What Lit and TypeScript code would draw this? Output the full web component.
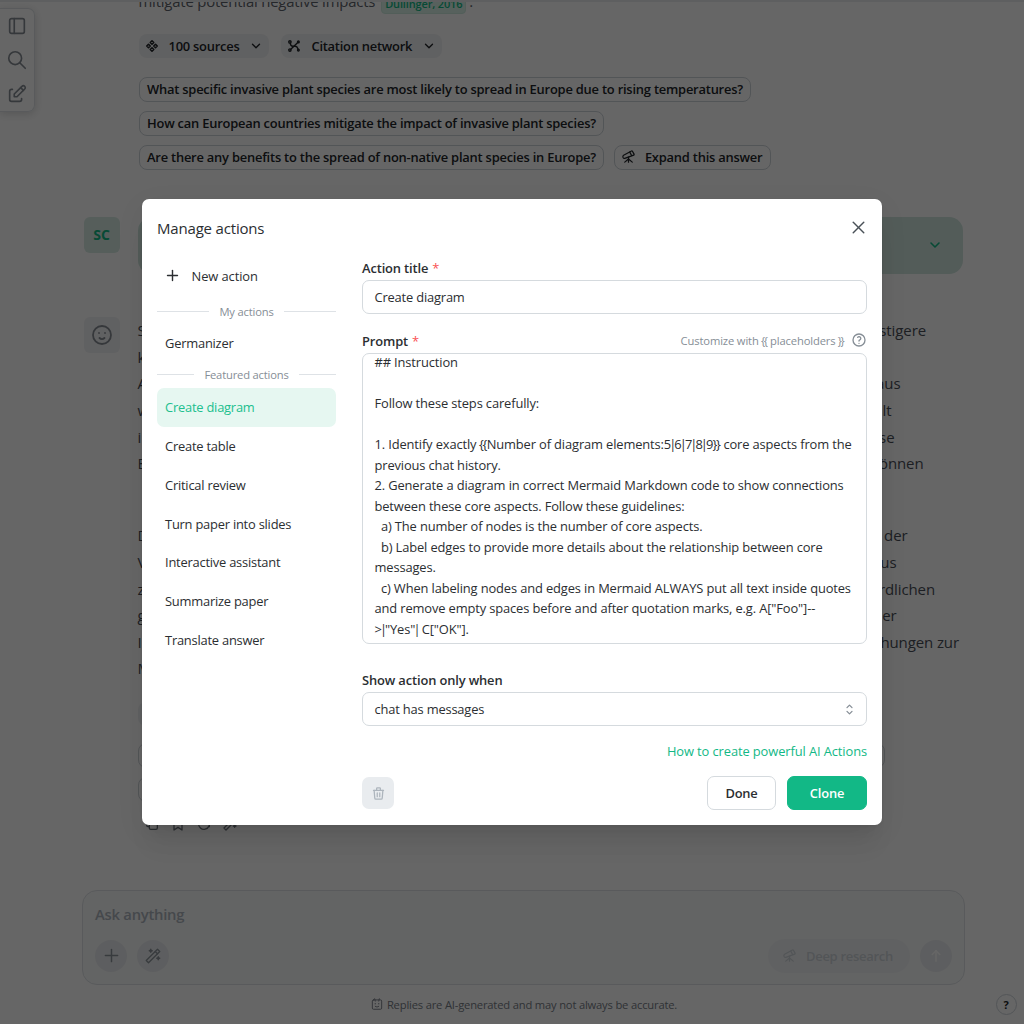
import { LitElement, html, css, svg } from "lit";
import { customElement, property } from "lit/decorators.js";
import { classMap } from "lit/directives/class-map.js";

const PATHS: Record<string, string[]> = {
  sidebar: ["M6 4h12a2 2 0 0 1 2 2v12a2 2 0 0 1-2 2H6a2 2 0 0 1-2-2V6a2 2 0 0 1 2-2z", "M9 4v16"],
  search: ["M3 10a7 7 0 1 0 14 0a7 7 0 1 0-14 0", "M21 21l-6-6"],
  edit: [
    "M7 7H6a2 2 0 0 0-2 2v9a2 2 0 0 0 2 2h9a2 2 0 0 0 2-2v-1",
    "M20.385 6.585a2.1 2.1 0 0 0-2.97-2.97L9 12v3h3l8.385-8.415z",
    "M16 5l3 3",
  ],
  components: [
    "M3 12l3 3l3-3l-3-3z",
    "M15 12l3 3l3-3l-3-3z",
    "M9 6l3 3l3-3l-3-3z",
    "M9 18l3 3l3-3l-3-3z",
  ],
  network: [
    "M3 5a2 2 0 1 0 4 0a2 2 0 1 0-4 0",
    "M18 5a1.500 1.500 0 1 0 3 0a1.500 1.500 0 1 0-3 0",
    "M3 19a2 2 0 1 0 4 0a2 2 0 1 0-4 0",
    "M18 19a1.500 1.500 0 1 0 3 0a1.500 1.500 0 1 0-3 0",
    "M6.500 17.500L18.500 6",
    "M5.500 7c.5 3.500 2 5.500 4.500 5.500h4c2.500 0 4 2 5 5",
  ],
  chevron: ["M6 9l6 6l6-6"],
  telescope: [
    "M6 21l6-5l6 5",
    "M12 13v8",
    "M3.294 13.678l.166.281c.52.88 1.624 1.265 2.605.91l14.242-5.165a1.023 1.023 0 0 0 .565-1.456l-2.620-4.705a1.087 1.087 0 0 0-1.447-.42l-12.694 6.944c-1.014.555-1.426 2.110-.817 3.611z",
    "M14 5l3 5.500",
  ],
  smile: ["M3 12a9 9 0 1 0 18 0a9 9 0 1 0-18 0", "M9 10h.01", "M15 10h.01", "M9.500 15a3.500 3.500 0 0 0 5 0"],
  plus: ["M12 5v14", "M5 12h14"],
  close: ["M18 6L6 18", "M6 6l12 12"],
  help: [
    "M3 12a9 9 0 1 0 18 0a9 9 0 1 0-18 0",
    "M12 17v.01",
    "M12 13.500a1.500 1.500 0 0 1 1-1.500a2.600 2.600 0 1 0-3-4",
  ],
  selector: ["M8 9l4-4l4 4", "M16 15l-4 4l-4-4"],
  trash: [
    "M4 7h16",
    "M10 11v6",
    "M14 11v6",
    "M5 7l1 12a2 2 0 0 0 2 2h8a2 2 0 0 0 2-2l1-12",
    "M9 7V4a1 1 0 0 1 1-1h4a1 1 0 0 1 1 1v3",
  ],
  wand: [
    "M6 21L21 6l-3-3L3 18l3 3",
    "M15 6l3 3",
    "M9 3a2 2 0 0 0 2 2a2 2 0 0 0-2 2a2 2 0 0 0-2-2a2 2 0 0 0 2-2",
    "M19 13a2 2 0 0 0 2 2a2 2 0 0 0-2 2a2 2 0 0 0-2-2a2 2 0 0 0 2-2",
  ],
  arrowUp: ["M12 5v14", "M17 10l-5-5", "M7 10l5-5"],
  robot: [
    "M6 5h12a2 2 0 0 1 2 2v12a2 2 0 0 1-2 2H6a2 2 0 0 1-2-2V7a2 2 0 0 1 2-2z",
    "M9 16c1 .667 2 1 3 1s2-.333 3-1",
    "M9 7L8 3",
    "M15 7l1-4",
    "M9 12v-1",
    "M15 12v-1",
  ],
  copy: [
    "M10 8h8a2 2 0 0 1 2 2v8a2 2 0 0 1-2 2h-8a2 2 0 0 1-2-2v-8a2 2 0 0 1 2-2z",
    "M16 8V6a2 2 0 0 0-2-2H6a2 2 0 0 0-2 2v8a2 2 0 0 0 2 2h2",
  ],
  bookmark: ["M18 7v14l-6-4l-6 4V7a4 4 0 0 1 4-4h4a4 4 0 0 1 4 4z"],
  refresh: ["M19.950 11a8 8 0 1 0-.5 4", "M20 16v-5h-5"],
};

@customElement("ui-icon")
export class UiIcon extends LitElement {
  static styles = css`
    :host { display: inline-flex; flex: none; width: 16px; height: 16px; }
    .glyph { width: 100%; height: 100%; fill: none; stroke: currentColor; stroke-linecap: round; stroke-linejoin: round; }
  `;
  @property() name = "";
  @property({ type: Number }) weight = 2;
  render() {
    return html`<svg class="glyph" viewBox="0 0 24 24" stroke-width=${this.weight}>
      ${(PATHS[this.name] ?? []).map((d) => svg`<path d=${d}></path>`)}
    </svg>`;
  }
}

@customElement("chat-page")
export class ChatPage extends LitElement {
  static styles = css`
    :host { display: flex; position: relative; z-index: 0; width: 1024px; height: 1024px; overflow: hidden; background: #fff;
      color: #212529; font-family: "Open Sans", "Noto Sans", sans-serif; font-size: 13px; }
    * { box-sizing: border-box; }
    .rail { flex: none; width: 35px; height: 104px; margin-top: 8px; border: 1px solid #dee2e6; border-left: 0;
      border-radius: 0 7px 7px 0; box-shadow: 0 2px 8px rgba(0,0,0,.16); display: flex; flex-direction: column;
      align-items: center; gap: 12px; padding: 6px 1px 0 0; color: #868c94; z-index: 1; }
    .rail ui-icon { width: 22px; height: 22px; }
    .main { flex: 1; min-width: 0; height: 1024px; border-top: 2px solid #eceef0; margin-left: -35px; padding-left: 82px;
      display: flex; flex-direction: column; }
    .col { padding-left: 56.500px; display: flex; flex-direction: column; align-items: flex-start; }
    .tail { height: 12px; display: flex; align-items: flex-end; overflow: hidden; color: #5c636b; font-size: 14.900px; line-height: 22px; }
    .tail-text { height: 24px; white-space: nowrap; letter-spacing: -.19px; }
    .cite { margin-left: 6px; height: 17px; width: 85px; text-align: center; white-space: nowrap; background: #d9f2e8; border: 1px solid #cdebdf;
      border-radius: 4px; color: #12b886; font-size: 11px; letter-spacing: -.15px; font-weight: 600; line-height: 12px; margin-bottom: 0; }
    .dot { margin-left: 3px; height: 24px; }
    .row { display: flex; align-items: center; }
    .chips { margin-top: 19.500px; gap: 12px; }
    .chip { height: 24px; border-radius: 8px; background: #f1f2f4; display: flex; align-items: center; font-weight: 600;
      font-size: 12.900px; padding: 0 6px; letter-spacing: -.23px; }
    .chip ui-icon { width: 14px; height: 14px; }
    .chip-label { margin: 0 10px 0 10px; }
    .asks { margin-top: 19px; display: flex; flex-direction: column; gap: 9px; }
    .asks .row { gap: 10px; }
    .ask { height: 25px; border: 1px solid #ced4da; border-radius: 8px; padding: 0 7.500px 1px; display: flex; align-items: center;
      white-space: nowrap; font-weight: 600; font-size: 12.900px; letter-spacing: -.208px; }
    .ask ui-icon { width: 15px; height: 15px; margin: 0 9px 0 -2px; }
    .turn { display: flex; gap: 18px; padding-left: 1.500px; width: 881px; }
    .user { margin-top: 47px; height: 57px; }
    .face { flex: none; width: 36px; height: 36px; border-radius: 6px; background: #f1f2f4; color: #868c94; display: flex;
      align-items: center; justify-content: center; font-weight: 700; font-size: 14px; padding-bottom: 1px; }
    .face ui-icon { width: 24px; height: 24px; }
    .face.me { background: #d6ebe4; color: #12b886; }
    .reply .face { margin-top: .5px; padding: 0; }
    .bubble { flex: 1; background: #cfe6de; border-radius: 14px; display: flex; align-items: center; justify-content: flex-end;
      padding-right: 20px; color: #12b886; }
    .reply { margin-top: 43px; }
    .answer { flex: 1; display: flex; flex-direction: column; color: #4a4f59; font-size: 15px; letter-spacing: -.1px; padding-top: .7px; }
    .line { height: 26.600px; display: flex; justify-content: space-between; line-height: 26.600px; }
    .gap { height: 45.600px; }
    .under { display: flex; flex-direction: column; margin-top: 20px; gap: 9px; }
    .ghost { height: 25px; width: 500px; border-radius: 8px; border: 1px solid #ced4da; }
    .ghost.fill { background: #f1f2f4; border: 0; margin-bottom: 8px; height: 24px; }
    .ghost.wide { width: 747px; }
    .tools { display: flex; gap: 10px; margin: 5px 0 0 6px; color: #6c737b; }
    .tools ui-icon { width: 16px; height: 16px; }
    .composer { margin-top: 58px; width: 883px; height: 95px; flex: none; border: 1px solid #dee2e6; border-radius: 15px;
      background: #f8f9fa; padding: 12px 12px 11px; display: flex; flex-direction: column; justify-content: space-between; }
    .holder { color: #adb5bd; font-weight: 600; font-size: 14.800px; line-height: 22px; letter-spacing: -.25px; }
    .bar { display: flex; align-items: center; gap: 10px; height: 34px; }
    .round { width: 32px; height: 32px; border-radius: 50%; background: #e9ecef; color: #8d949b; display: flex; align-items: center;
      justify-content: center; }
    .round ui-icon { width: 18px; height: 18px; }
    .round .big { width: 21px; height: 21px; }
    .round.send { color: #fff; }
    .deep { margin-left: auto; height: 34px; width: 142px; border-radius: 17px; background: #f1f3f5; color: #ced4da; display: flex;
      align-items: center; padding-left: 14px; gap: 9px; font-weight: 600; font-size: 13px; white-space: nowrap; letter-spacing: -.3px; }
    .deep ui-icon { width: 15px; height: 15px; }
    .foot { height: 39px; width: 883px; display: flex; align-items: center; justify-content: center; gap: 3px; color: #777d86;
      font-size: 11.200px; letter-spacing: -.18px; }
    .foot ui-icon { width: 14px; height: 14px; }
    .corner { position: absolute; left: 995.500px; top: 993.500px; width: 21px; height: 21px; border: 1px solid #ced4da; border-radius: 50%;
      display: flex; align-items: center; justify-content: center; font-weight: 700; font-size: 11px; background: #fff; }
  `;

  private lines: [string, string, number][] = [
    ["S", "günstigere", 788.5],
    ["k", "", 780],
    ["A", "aus", 763],
    ["w", "stellt", 754],
    ["i", "diese", 757],
    ["E", "können", 786],
  ];
  private more: [string, string, number][] = [
    ["D", "der", 770],
    ["V", "aus", 759],
    ["z", "nördlichen", 797.5],
    ["g", "früher", 759],
    ["I", "Bemühungen zur", 821.5],
    ["M", "", 780],
  ];

  private line([a, b, w]: [string, string, number]) {
    return html`<div class="line" style="width:${w}px"><span>${a}</span><span>${b}</span></div>`;
  }

  render() {
    return html`
      <nav class="rail">
        <ui-icon name="sidebar" weight="1.8"></ui-icon>
        <ui-icon name="search" weight="1.8"></ui-icon>
        <ui-icon name="edit" weight="1.8"></ui-icon>
      </nav>
      <div class="main">
        <div class="col">
          <div class="tail">
            <span class="tail-text">mitigate potential negative impacts</span>
            <span class="cite">Dullinger, 2016</span><span class="dot">.</span>
          </div>
          <div class="row chips">
            <div class="chip"><ui-icon name="components" weight="2.6"></ui-icon><span class="chip-label">100 sources</span><ui-icon name="chevron" weight="2.3"></ui-icon></div>
            <div class="chip"><ui-icon name="network" weight="2.3"></ui-icon><span class="chip-label">Citation network</span><ui-icon name="chevron" weight="2.3"></ui-icon></div>
          </div>
          <div class="asks">
            <div class="row"><div class="ask">What specific invasive plant species are most likely to spread in Europe due to rising temperatures?</div></div>
            <div class="row"><div class="ask">How can European countries mitigate the impact of invasive plant species?</div></div>
            <div class="row">
              <div class="ask">Are there any benefits to the spread of non-native plant species in Europe?</div>
              <div class="ask"><ui-icon name="telescope"></ui-icon>Expand this answer</div>
            </div>
          </div>
        </div>
        <div class="turn user">
          <div class="face me">SC</div>
          <div class="bubble"><ui-icon name="chevron" weight="2.4"></ui-icon></div>
        </div>
        <div class="turn reply">
          <div class="face"><ui-icon name="smile" weight="1.8"></ui-icon></div>
          <div class="answer">
            ${this.lines.map((l) => this.line(l))}
            <div class="gap"></div>
            ${this.more.map((l) => this.line(l))}
            <div class="under">
              <div class="ghost fill"></div>
              <div class="ghost wide"></div>
              <div class="ghost"></div>
              <div class="tools">
                <ui-icon name="copy"></ui-icon><ui-icon name="bookmark"></ui-icon><ui-icon name="refresh"></ui-icon><ui-icon name="wand"></ui-icon>
              </div>
            </div>
          </div>
        </div>
        <div class="composer">
          <div class="holder">Ask anything</div>
          <div class="bar">
            <div class="round"><ui-icon class="big" name="plus" weight="1.7"></ui-icon></div>
            <div class="round"><ui-icon name="wand" weight="1.8"></ui-icon></div>
            <div class="deep"><ui-icon name="telescope"></ui-icon>Deep research</div>
            <div class="round send"><ui-icon name="arrowUp"></ui-icon></div>
          </div>
        </div>
        <div class="foot"><ui-icon name="robot" weight="1.6"></ui-icon>Replies are AI-generated and may not always be accurate.</div>
      </div>
      <div class="corner">?</div>
    `;
  }
}

@customElement("actions-dialog")
export class ActionsDialog extends LitElement {
  static styles = css`
    :host { display: flex; flex-direction: column; width: 740px; height: 626px; background: #fff; border-radius: 7px; color: #2b2e31;
      box-shadow: 0 1px 3px rgba(0,0,0,.05), 0 28px 23px -7px rgba(0,0,0,.05), 0 12px 12px -7px rgba(0,0,0,.04), 0 8px 30px rgba(0,0,0,.06);
      font-family: "Open Sans", "Noto Sans", sans-serif; font-size: 12.900px; letter-spacing: -.18px; padding: 0 15px;
      box-sizing: border-box; }
    * { box-sizing: border-box; }
    .head { height: 57px; margin-bottom: 1px; display: flex; align-items: center; justify-content: space-between; font-size: 15px; flex: none; }
    .head ui-icon { width: 21px; height: 21px; margin: -1px -1.500px 0 0; color: #495057; }
    .body { display: flex; gap: 26px; }
    .side { width: 179px; flex: none; }
    .new { height: 38px; display: flex; align-items: center; gap: 11px; padding-left: 6.500px; letter-spacing: -.08px; }
    .new ui-icon { width: 17px; height: 17px; margin-top: -1px; }
    .sep { display: flex; align-items: center; gap: 10px; color: #868e96; font-size: 11.200px; height: 25px; margin-top: 4px; }
    .sep.tight { height: 23px; margin: .5px 0 1.500px; }
    .sep::before, .sep::after { content: ""; flex: 1; height: 1px; background: #dee2e6; }
    .item { height: 38.800px; border-radius: 7px; display: flex; align-items: center; padding-left: 8px; letter-spacing: -.22px; }
    .item.on { background: #e6f7f1; color: #20bf8e; }
    .form { flex: 1; min-width: 0; display: flex; flex-direction: column; }
    .label { height: 23px; display: flex; align-items: center; font-weight: 600; padding-bottom: 1px; letter-spacing: -.13px; }
    .prompt-label { margin-top: 15.500px; }
    .when { margin-top: 25.500px; }
    .req { color: #fa5252; font-weight: 400; margin-left: 4px; }
    .hint { margin-left: auto; display: flex; align-items: center; gap: 7px; font-weight: 400; color: #868e96; font-size: 11.200px;
      white-space: nowrap; flex: none; }
    .hint ui-icon { margin: -1px 0 0; }
    .field { height: 34px; border: 1px solid #d5dade; border-radius: 7px; padding: 0 11.500px; display: flex; align-items: center;
      justify-content: space-between; }
    .field ui-icon { width: 15px; height: 15px; color: #868e96; margin-right: -2px; }
    .prompt { height: 291px; border: 1px solid #d5dade; border-radius: 7px; padding: 0 0 0 11.500px; overflow: hidden; letter-spacing: -.13px; }
    .pline { height: 20.500px; line-height: 20.500px; white-space: pre; }
    .prompt .pline:first-child { margin-top: -1.500px; }
    .pipe { margin: 0 -1.850px; }
    .brace { margin: 0 -.6px; }
    .link { margin-top: 14px; height: 22px; line-height: 22px; text-align: right; color: #12b886; letter-spacing: -.1px; }
    .acts { margin-top: 14px; height: 34px; display: flex; align-items: center; gap: 11px; }
    .bin { width: 32px; height: 32px; border-radius: 7px; background: #e9ecef; color: #adb5bd; display: flex; align-items: center;
      justify-content: center; margin-right: auto; }
    .bin ui-icon { width: 15px; height: 15px; }
    .btn { height: 34px; border-radius: 7px; display: flex; align-items: center; justify-content: center; font-weight: 600; width: 69px;
      border: 1px solid #d5dade; padding-bottom: 1px; }
    .btn.go { width: 80px; background: #12b886; border-color: #12b886; color: #fff; }
  `;

  private featured = [
    "Create diagram",
    "Create table",
    "Critical review",
    "Turn paper into slides",
    "Interactive assistant",
    "Summarize paper",
    "Translate answer",
  ];

  private prompt = [
    "## Instruction",
    "",
    "Follow these steps carefully:",
    "",
    "1. Identify exactly {{Number of diagram elements:5|6|7|8|9}} core aspects from the",
    "previous chat history.",
    "2. Generate a diagram in correct Mermaid Markdown code to show connections",
    "between these core aspects. Follow these guidelines:",
    "  a) The number of nodes is the number of core aspects.",
    "  b) Label edges to provide more details about the relationship between core",
    "messages.",
    "  c) When labeling nodes and edges in Mermaid ALWAYS put all text inside quotes",
    "and remove empty spaces before and after quotation marks, e.g. A[\"Foo\"]--",
    ">|\"Yes\"| C[\"OK\"].",
  ];

  /* Pipes and braces get tightened side bearings; all other runs are plain text. */
  private tight(text: string) {
    return text.split(/([|{}])/).map((part) =>
      part === "|" ? html`<span class="pipe">|</span>`
        : part === "{" || part === "}" ? html`<span class="brace">${part}</span>`
        : part);
  }

  render() {
    return html`
      <div class="head"><span>Manage actions</span><ui-icon name="close" weight="1.7"></ui-icon></div>
      <div class="body">
        <div class="side">
          <div class="new"><ui-icon name="plus" weight="2"></ui-icon>New action</div>
          <div class="sep">My actions</div>
          <div class="item">Germanizer</div>
          <div class="sep tight">Featured actions</div>
          ${this.featured.map((t, i) => html`<div class=${classMap({ item: true, on: i === 0 })}>${t}</div>`)}
        </div>
        <div class="form">
          <div class="label">Action title<span class="req">*</span></div>
          <div class="field">Create diagram</div>
          <div class="label prompt-label">Prompt<span class="req">*</span>
            <span class="hint"><span>${this.tight("Customize with {{ placeholders }}")}</span><ui-icon name="help"></ui-icon></span>
          </div>
          <div class="prompt">${this.prompt.map((l) => html`<div class="pline">${this.tight(l)}</div>`)}</div>
          <div class="label when">Show action only when</div>
          <div class="field">chat has messages<ui-icon name="selector"></ui-icon></div>
          <div class="link">How to create powerful AI Actions</div>
          <div class="acts">
            <div class="bin"><ui-icon name="trash"></ui-icon></div>
            <div class="btn">Done</div>
            <div class="btn go">Clone</div>
          </div>
        </div>
      </div>
    `;
  }
}

@customElement("app-root")
export class AppRoot extends LitElement {
  static styles = css`
    :host { display: block; position: relative; width: 1024px; height: 1024px; overflow: hidden; }
    .veil { position: absolute; inset: 0; background: rgba(0, 0, 0, .6); display: flex; align-items: center; justify-content: center; }
  `;
  render() {
    return html`
      <chat-page></chat-page>
      <div class="veil"><actions-dialog></actions-dialog></div>
    `;
  }
}
